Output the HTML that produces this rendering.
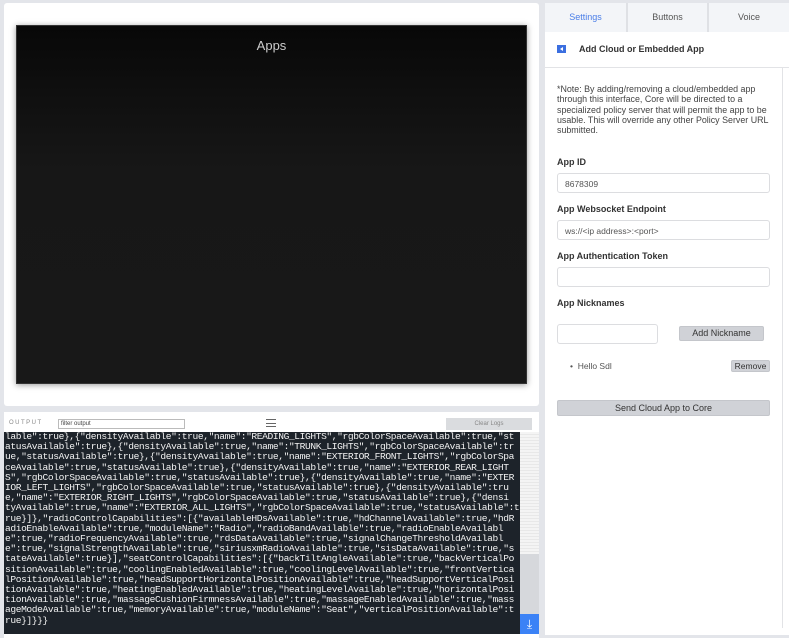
<!DOCTYPE html>
<html><head><meta charset="utf-8"><style>
*{box-sizing:border-box;margin:0;padding:0}
body{width:789px;height:638px;background:#e3e5ea;font-family:"Liberation Sans",sans-serif;position:relative;overflow:hidden}
.abs{position:absolute}
#top{left:4px;top:3px;width:535px;height:403px;background:#fff;border-radius:3px}
#screen{left:16px;top:25px;width:511px;height:359px;background:linear-gradient(#080808,#171717 40%,#181818);box-shadow:0 1px 6px rgba(0,0,0,.4);border:1px solid #333}
#screen div{text-align:center;color:#ccc;font-size:13px;margin-top:12px}
#bot{left:4px;top:412px;width:535px;height:226px;background:#fff}
#log{left:4px;top:432px;width:516px;height:202px;background:#1d232a;color:#f2f2f2;font-family:"Liberation Mono",monospace;font-size:9.6px;line-height:10.2px;white-space:pre;overflow:hidden;padding-left:1px;letter-spacing:-0.4px}
#right{left:545px;top:3px;width:244px;height:632px;background:#fff}
.tab{top:3px;height:29px;background:#f3f5f8;font-size:9px;color:#555;text-align:center;line-height:28px;border-right:2px solid #dfe1e5}
.lbl{left:557px;font-size:9px;font-weight:bold;color:#333}
.inp{left:557px;width:213px;height:20px;border:1px solid #dcdde0;border-radius:3px;font-size:8.5px;color:#555;padding:5px 0 0 7px}
.btn{background:#d0d2d7;border:1px solid #c4c6cb;border-radius:2px;font-size:9px;color:#333;text-align:center}
</style></head><body>
<div id="top" class="abs"></div>
<div id="screen" class="abs"><div>Apps</div></div>
<div id="bot" class="abs"></div>
<div class="abs" style="left:9px;top:420px;font-size:6px;letter-spacing:1.5px;color:#888">OUTPUT</div>
<div class="abs" style="left:58px;top:419px;width:127px;height:10px;border:1px solid #bbb;font-size:6px;color:#444;padding:1px 2px">filter output</div>
<div class="abs" style="left:266px;top:419px;width:10px;height:8px;border-top:1px solid #666;border-bottom:1px solid #666"></div>
<div class="abs" style="left:266px;top:423px;width:10px;height:1px;background:#666"></div>
<div class="abs" style="left:446px;top:418px;width:86px;height:12px;background:#dadcdf;font-size:6px;color:#888;text-align:center;line-height:12px">Clear Logs</div>
<div id="log" class="abs">lable":true},{"densityAvailable":true,"name":"READING_LIGHTS","rgbColorSpaceAvailable":true,"st
atusAvailable":true},{"densityAvailable":true,"name":"TRUNK_LIGHTS","rgbColorSpaceAvailable":tr
ue,"statusAvailable":true},{"densityAvailable":true,"name":"EXTERIOR_FRONT_LIGHTS","rgbColorSpa
ceAvailable":true,"statusAvailable":true},{"densityAvailable":true,"name":"EXTERIOR_REAR_LIGHT
S","rgbColorSpaceAvailable":true,"statusAvailable":true},{"densityAvailable":true,"name":"EXTER
IOR_LEFT_LIGHTS","rgbColorSpaceAvailable":true,"statusAvailable":true},{"densityAvailable":tru
e,"name":"EXTERIOR_RIGHT_LIGHTS","rgbColorSpaceAvailable":true,"statusAvailable":true},{"densi
tyAvailable":true,"name":"EXTERIOR_ALL_LIGHTS","rgbColorSpaceAvailable":true,"statusAvailable":t
rue}]},"radioControlCapabilities":[{"availableHDsAvailable":true,"hdChannelAvailable":true,"hdR
adioEnableAvailable":true,"moduleName":"Radio","radioBandAvailable":true,"radioEnableAvailabl
e":true,"radioFrequencyAvailable":true,"rdsDataAvailable":true,"signalChangeThresholdAvailabl
e":true,"signalStrengthAvailable":true,"siriusxmRadioAvailable":true,"sisDataAvailable":true,"s
tateAvailable":true}],"seatControlCapabilities":[{"backTiltAngleAvailable":true,"backVerticalPo
sitionAvailable":true,"coolingEnabledAvailable":true,"coolingLevelAvailable":true,"frontVertica
lPositionAvailable":true,"headSupportHorizontalPositionAvailable":true,"headSupportVerticalPosi
tionAvailable":true,"heatingEnabledAvailable":true,"heatingLevelAvailable":true,"horizontalPosi
tionAvailable":true,"massageCushionFirmnessAvailable":true,"massageEnabledAvailable":true,"mass
ageModeAvailable":true,"memoryAvailable":true,"moduleName":"Seat","verticalPositionAvailable":t
rue}]}}}</div>
<div class="abs" style="left:520px;top:432px;width:19px;height:122px;background:repeating-linear-gradient(#f4f4f4 0 2px,#e8e8e8 2px 3px)"></div>
<div class="abs" style="left:520px;top:554px;width:19px;height:60px;background:#d6d8dc"></div>
<div class="abs" style="left:520px;top:614px;width:19px;height:20px;background:#3b82f6;color:#fff;font-size:12px;text-align:center;line-height:20px">⤓</div>
<div id="right" class="abs"></div>
<div class="abs tab" style="left:545px;width:83px;color:#4a7ee8">Settings</div>
<div class="abs tab" style="left:628px;width:81px">Buttons</div>
<div class="abs tab" style="left:709px;width:80px;border-right:none">Voice</div>
<div class="abs" style="left:557px;top:45px;width:9px;height:8px;background:#3b6fe0"></div>
<div class="abs" style="left:560px;top:47px;width:0;height:0;border-right:3px solid #fff;border-top:2px solid transparent;border-bottom:2px solid transparent"></div>
<div class="abs" style="left:579px;top:44px;font-size:9px;font-weight:bold;color:#333">Add Cloud or Embedded App</div>
<div class="abs" style="left:545px;top:67px;width:244px;height:1px;background:#e2e3e6"></div>
<div class="abs" style="left:782px;top:68px;width:1px;height:560px;background:#e2e3e6"></div>
<div class="abs" style="left:557px;top:84px;width:218px;font-size:8.9px;line-height:10.3px;color:#444">*Note: By adding/removing a cloud/embedded app through this interface, Core will be directed to a specialized policy server that will permit the app to be usable. This will override any other Policy Server URL submitted.</div>
<div class="abs lbl" style="top:157px">App ID</div>
<div class="abs inp" style="top:173px">8678309</div>
<div class="abs lbl" style="top:204px">App Websocket Endpoint</div>
<div class="abs inp" style="top:220px">ws://&lt;ip address&gt;:&lt;port&gt;</div>
<div class="abs lbl" style="top:251px">App Authentication Token</div>
<div class="abs inp" style="top:267px"></div>
<div class="abs lbl" style="top:298px">App Nicknames</div>
<div class="abs inp" style="top:324px;width:101px"></div>
<div class="abs btn" style="left:679px;top:326px;width:85px;height:15px;line-height:13px">Add Nickname</div>
<div class="abs" style="left:570px;top:361px;font-size:8.5px;color:#555">•&nbsp; Hello Sdl</div>
<div class="abs btn" style="left:731px;top:360px;width:39px;height:12px;line-height:10px;font-size:8.5px">Remove</div>
<div class="abs btn" style="left:557px;top:400px;width:213px;height:16px;line-height:14px">Send Cloud App to Core</div>
</body></html>
